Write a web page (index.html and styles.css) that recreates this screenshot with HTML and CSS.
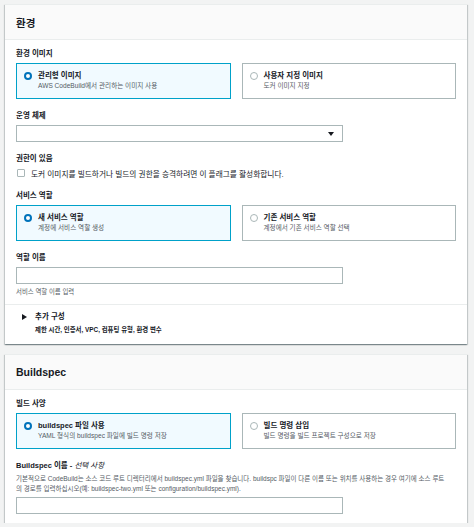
FILE: index.html
```html
<!DOCTYPE html>
<html lang="ko">
<head>
<meta charset="utf-8">
<link rel="stylesheet" href="styles.css">
</head>
<body>
<section class="panel">
  <header class="panel-header"><h2>환경</h2></header>
  <div class="panel-body">
    <div class="field">
      <div class="label">환경 이미지</div>
      <div class="tiles">
        <div class="tile selected">
          <span class="radio on"></span>
          <div><div class="tile-title">관리형 이미지</div><div class="tile-sub">AWS CodeBuild에서 관리하는 이미지 사용</div></div>
        </div>
        <div class="tile">
          <span class="radio"></span>
          <div><div class="tile-title">사용자 지정 이미지</div><div class="tile-sub">도커 이미지 지정</div></div>
        </div>
      </div>
    </div>
    <div class="field">
      <div class="label">운영 체제</div>
      <div class="select"><span class="caret"></span></div>
    </div>
    <div class="field">
      <div class="label">권한이 있음</div>
      <div class="check-row"><span class="checkbox"></span><span>도커 이미지를 빌드하거나 빌드의 권한을 승격하려면 이 플래그를 활성화합니다.</span></div>
    </div>
    <div class="field">
      <div class="label">서비스 역할</div>
      <div class="tiles">
        <div class="tile selected">
          <span class="radio on"></span>
          <div><div class="tile-title">새 서비스 역할</div><div class="tile-sub">계정에 서비스 역할 생성</div></div>
        </div>
        <div class="tile">
          <span class="radio"></span>
          <div><div class="tile-title">기존 서비스 역할</div><div class="tile-sub">계정에서 기존 서비스 역할 선택</div></div>
        </div>
      </div>
    </div>
    <div class="field last">
      <div class="label">역할 이름</div>
      <div class="input"></div>
      <div class="hint">서비스 역할 이름 입력</div>
    </div>
  </div>
  <div class="expander">
    <div class="exp-title"><span class="tri"></span>추가 구성</div>
    <div class="exp-sub">제한 시간, 인증서, VPC, 컴퓨팅 유형, 환경 변수</div>
  </div>
</section>

<section class="panel second">
  <header class="panel-header"><h2>Buildspec</h2></header>
  <div class="panel-body bottom">
    <div class="field">
      <div class="label">빌드 사양</div>
      <div class="tiles">
        <div class="tile selected">
          <span class="radio on"></span>
          <div><div class="tile-title">buildspec 파일 사용</div><div class="tile-sub">YAML 형식의 buildspec 파일에 빌드 명령 저장</div></div>
        </div>
        <div class="tile">
          <span class="radio"></span>
          <div><div class="tile-title">빌드 명령 삽입</div><div class="tile-sub">빌드 명령을 빌드 프로젝트 구성으로 저장</div></div>
        </div>
      </div>
    </div>
    <div class="field last">
      <div class="label">Buildspec 이름 - <i>선택 사항</i></div>
      <div class="desc">기본적으로 CodeBuild는 소스 코드 루트 디렉터리에서 buildspec.yml 파일을 찾습니다. buildspc 파일이 다른 이름 또는 위치를 사용하는 경우 여기에 소스 루트<br>의 경로를 입력하십시오(예: buildspec-two.yml 또는 configuration/buildspec.yml).</div>
      <div class="input"></div>
    </div>
  </div>
</section>
</body>
</html>
```

FILE: styles.css
```css
* { box-sizing: border-box; }
html, body { margin: 0; }
body {
  background: #f2f3f3;
  padding: 4px 7px 0 5px;
  font-family: "Liberation Sans", "Noto Sans CJK KR", sans-serif;
  color: #16191f;
}
.panel {
  background: #fff;
  border-top: 1px solid #eaeded;
  box-shadow: 0 1px 1px 0 rgba(0, 28, 36, 0.3), 1px 1px 1px 0 rgba(0, 28, 36, 0.15), -1px 1px 1px 0 rgba(0, 28, 36, 0.15);
}
.panel.second { margin-top: 10px; }
.panel-header {
  background: #fafafa;
  border-bottom: 1px solid #eaeded;
  height: 35px;
  display: flex;
  align-items: center;
  padding: 0 11px;
}
.panel-header h2 {
  margin: 0;
  font-size: 10.5px;
  font-weight: 700;
}
.panel-body { padding: 8px 11px 0; }
.panel-body.bottom { padding-bottom: 9px; }
.field { margin-bottom: 11px; }
.field.last { margin-bottom: 0; }
.label {
  font-size: 7.5px;
  font-weight: 700;
  line-height: 12px;
  margin-bottom: 3px;
}
.label i { font-weight: 400; }
.tiles {
  display: grid;
  grid-template-columns: 1fr 1fr;
  gap: 11px;
}
.tile {
  height: 36px;
  border: 1px solid #aab7b8;
  display: flex;
  align-items: flex-start;
  padding: 7px 0 0 7px;
  gap: 6px;
}
.tile.selected {
  background: #f1faff;
  border-color: #00a1c9;
}
.radio {
  width: 8px;
  height: 8px;
  border-radius: 50%;
  border: 1px solid #aab7b8;
  background: #fff;
  margin-top: 1px;
  flex: none;
}
.radio.on { border: 2.5px solid #0073bb; }
.tile-title {
  font-size: 7.5px;
  font-weight: 700;
  line-height: 10px;
}
.tile-sub {
  font-size: 6.6px;
  color: #545b64;
  line-height: 10px;
}
.select, .input {
  width: 327px;
  height: 17px;
  border: 1px solid #aab7b8;
  background: #fff;
}
.select {
  display: flex;
  justify-content: flex-end;
  align-items: center;
  padding-right: 8px;
}
.caret {
  width: 0;
  height: 0;
  border-left: 3px solid transparent;
  border-right: 3px solid transparent;
  border-top: 4px solid #16191f;
}
.check-row {
  display: flex;
  align-items: center;
  gap: 6px;
  height: 12px;
  font-size: 7.7px;
  margin-top: -1px;
  padding-left: 1px;
}
.checkbox {
  width: 8px;
  height: 8px;
  border: 1px solid #aab7b8;
  border-radius: 1px;
  flex: none;
}
.hint {
  font-size: 6.4px;
  color: #545b64;
  line-height: 10px;
  margin-top: 3px;
}
.expander {
  margin-top: 7px;
  border-top: 1px solid #eaeded;
  padding: 6px 11px 8px 17px;
}
.exp-title {
  display: flex;
  align-items: center;
  font-size: 7.5px;
  font-weight: 700;
  line-height: 12px;
}
.tri {
  width: 0;
  height: 0;
  border-top: 3px solid transparent;
  border-bottom: 3px solid transparent;
  border-left: 5px solid #16191f;
  margin-right: 8px;
}
.exp-sub {
  font-size: 6.4px;
  font-weight: 700;
  line-height: 13px;
  padding-left: 13px;
}
.desc {
  font-size: 6.5px;
  color: #545b64;
  line-height: 10px;
  white-space: nowrap;
  margin-top: -1px;
  margin-bottom: 3px;
}
```
